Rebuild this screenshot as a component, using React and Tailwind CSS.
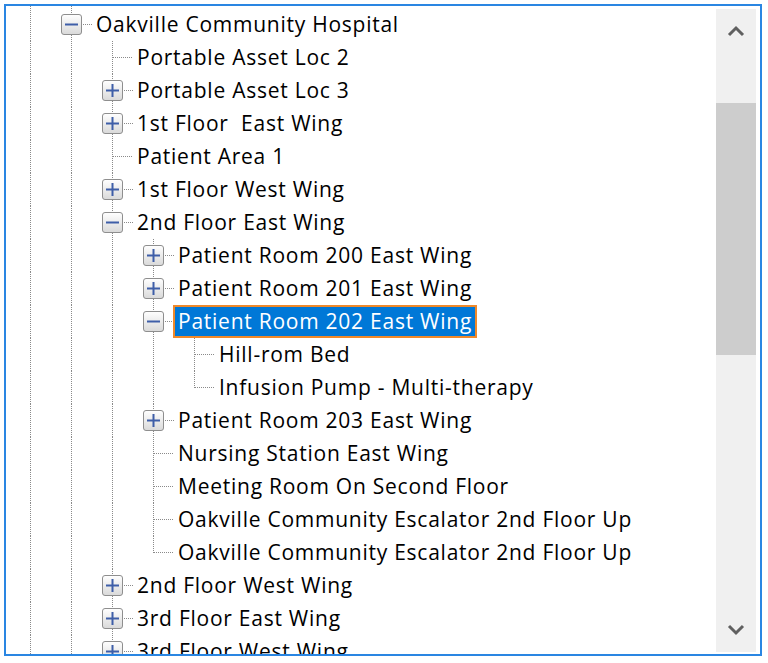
import React from "react";

// gutter cell kinds: line | tee | elbow | plus | minus
const rows = [
  { cells: ["line", "line"], spacer: true },
  { cells: ["line", "minus"], label: "Oakville Community Hospital" },
  { cells: ["line", "line", "tee"], label: "Portable Asset Loc 2" },
  { cells: ["line", "line", "plus"], label: "Portable Asset Loc 3" },
  { cells: ["line", "line", "plus"], label: "1st Floor\u00a0 East Wing" },
  { cells: ["line", "line", "tee"], label: "Patient Area 1" },
  { cells: ["line", "line", "plus"], label: "1st Floor West Wing" },
  { cells: ["line", "line", "minus"], label: "2nd Floor East Wing" },
  { cells: ["line", "line", "line", "plus"], label: "Patient Room 200 East Wing" },
  { cells: ["line", "line", "line", "plus"], label: "Patient Room 201 East Wing" },
  { cells: ["line", "line", "line", "minus"], label: "Patient Room 202 East Wing", selected: true },
  { cells: ["line", "line", "line", "line", "tee"], label: "Hill-rom Bed" },
  { cells: ["line", "line", "line", "line", "elbow"], label: "Infusion Pump - Multi-therapy" },
  { cells: ["line", "line", "line", "plus"], label: "Patient Room 203 East Wing" },
  { cells: ["line", "line", "line", "tee"], label: "Nursing Station East Wing" },
  { cells: ["line", "line", "line", "tee"], label: "Meeting Room On Second Floor" },
  { cells: ["line", "line", "line", "tee"], label: "Oakville Community Escalator 2nd Floor Up" },
  { cells: ["line", "line", "line", "elbow"], label: "Oakville Community Escalator 2nd Floor Up" },
  { cells: ["line", "line", "plus"], label: "2nd Floor West Wing" },
  { cells: ["line", "line", "plus"], label: "3rd Floor East Wing" },
  { cells: ["line", "line", "plus"], label: "3rd Floor West Wing" },
];

const dot = { stroke: "#8a8a8a", strokeWidth: 1, strokeDasharray: "1 1", shapeRendering: "crispEdges" };

function Gutter({ kind, h }) {
  const mid = 16.5;
  const isBox = kind === "plus" || kind === "minus";
  return (
    <svg width="41" height={h} className="shrink-0 block">
      <defs>
        <linearGradient id="boxfill" x1="0" y1="0" x2="0" y2="1">
          <stop offset="0" stopColor="#ffffff" />
          <stop offset="1" stopColor="#d9d9d9" />
        </linearGradient>
      </defs>
      {kind === "line" || kind === "tee" ? <line x1="20.5" y1="0" x2="20.5" y2={h} {...dot} /> : null}
      {kind === "elbow" ? <line x1="20.5" y1="0" x2="20.5" y2={mid} {...dot} /> : null}
      {kind === "tee" || kind === "elbow" ? <line x1="21" y1={mid} x2="41" y2={mid} {...dot} /> : null}
      {isBox ? (
        <g>
          <line x1="20.5" y1="0" x2="20.5" y2="6" {...dot} />
          <line x1="20.5" y1="27" x2="20.5" y2={h} {...dot} />
          <line x1="32" y1={mid} x2="41" y2={mid} {...dot} />
          <rect x="10.5" y="6.5" width="20" height="20" rx="2.5" fill="url(#boxfill)" stroke="#8e8e8e" />
          <rect x="14" y="15.5" width="13" height="2" fill="#3e5ea8" />
          {kind === "plus" ? <rect x="19.5" y="10" width="2" height="13" fill="#3e5ea8" /> : null}
        </g>
      ) : null}
    </svg>
  );
}

function Chevron({ up }) {
  return (
    <svg width="20" height="12" viewBox="0 0 20 12">
      <path
        d={up ? "M3 10 L10 3 L17 10" : "M3 2 L10 9 L17 2"}
        fill="none"
        stroke="#606060"
        strokeWidth="3"
      />
    </svg>
  );
}

export default function App() {
  return (
    <div className="w-[768px] h-[663px] bg-white" style={{ fontFamily: '"Open Sans", "Noto Sans", sans-serif' }}>
      <div className="ml-[4px] mt-[4px] w-[758px] h-[652px] border-2 border-[#2a86e2] flex overflow-hidden">
        <div className="flex-1 pl-[4px] overflow-hidden">
          {rows.map((r, i) => (
            <div key={i} className={`flex items-center ${r.spacer ? "h-[2px]" : "h-[33px]"}`}>
              {r.cells.map((c, j) => (
                <Gutter key={j} kind={c} h={r.spacer ? 2 : 33} />
              ))}
              {r.label ? (
                <span
                  className={`ml-[-1px] whitespace-nowrap text-[21px] font-medium tracking-[0.75px] leading-[29px] px-[3px] border-2 ${
                    r.selected ? "bg-[#0078d7] border-[#f0892a] text-white" : "border-transparent text-black"
                  }`}
                >
                  {r.label}
                </span>
              ) : null}
            </div>
          ))}
        </div>
        <div className="w-[40px] mt-[3px] mb-[2px] mr-[4px] bg-[#f0f0f0] flex flex-col items-center">
          <div className="h-[44px] w-full flex items-center justify-center">
            <Chevron up />
          </div>
          <div className="mt-[50px] h-[252px] w-full bg-[#cdcdcd]" />
          <div className="flex-1" />
          <div className="h-[44px] w-full flex items-center justify-center">
            <Chevron />
          </div>
        </div>
      </div>
    </div>
  );
}
